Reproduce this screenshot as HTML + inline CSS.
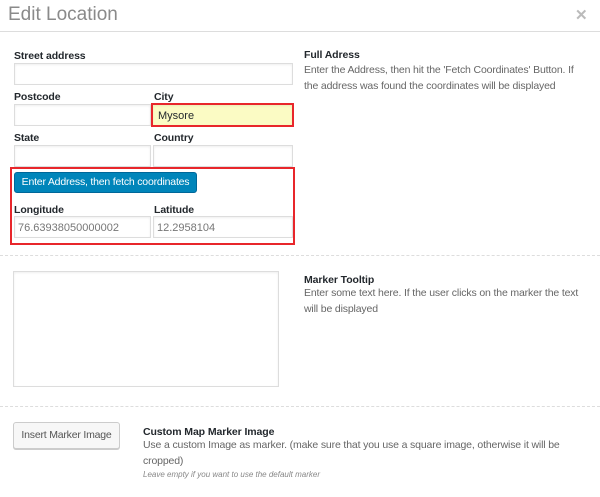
<!DOCTYPE html>
<html><head><style>
body{margin:0;width:600px;height:497px;background:#fff;font-family:"Liberation Sans",sans-serif;position:relative;overflow:hidden;color:#23282d}
.a{position:absolute}
.t{left:8px;top:4px;font-size:19px;color:#8a8a8a}
.hd{left:0;top:31px;width:600px;height:1px;background:#ddd}
.x{left:575px;top:6px;font-size:15px;color:#bbb;font-weight:bold}
.l{font-size:10.5px;font-weight:bold;color:#23282d;letter-spacing:-.1px}
.i{border:1px solid #ddd;box-shadow:inset 0 1px 2px rgba(0,0,0,.07);background:#fff;box-sizing:border-box;font-size:11px;color:#777;padding:4px 3px;line-height:12px}
.d{font-size:10.5px;color:#666;line-height:15.5px;letter-spacing:-.15px}
.dash{left:0;width:600px;border-top:1px dashed #ddd;height:0}
.red{border:2px solid #e8262b;box-sizing:border-box}
</style></head><body>
<div class="a t">Edit Location</div>
<div class="a x">✕</div>
<div class="a hd"></div>

<div class="a l" style="left:14px;top:50px">Street address</div>
<div class="a i" style="left:14px;top:63px;width:279px;height:22px"></div>
<div class="a l" style="left:14px;top:91px">Postcode</div>
<div class="a i" style="left:14px;top:104px;width:137px;height:22px"></div>
<div class="a l" style="left:154px;top:91px">City</div>
<div class="a i red" style="left:151px;top:103px;width:143px;height:24px;background:#fbfbc4;color:#23282d;padding:5px 5px">Mysore</div>
<div class="a l" style="left:14px;top:132px">State</div>
<div class="a i" style="left:14px;top:145px;width:137px;height:22px"></div>
<div class="a l" style="left:154px;top:132px">Country</div>
<div class="a i" style="left:153px;top:145px;width:140px;height:22px"></div>

<div class="a red" style="left:10px;top:167px;width:285px;height:78px"></div>
<div class="a" style="left:14px;top:172px;width:183px;height:21px;background:#0085ba;border:1px solid #006799;box-sizing:border-box;border-radius:3px;color:#fff;font-size:10.5px;text-align:center;line-height:19px;white-space:nowrap;letter-spacing:-.2px">Enter Address, then fetch coordinates</div>
<div class="a l" style="left:14px;top:204px">Longitude</div>
<div class="a i" style="left:14px;top:216px;width:137px;height:22px;padding:5px 3px">76.63938050000002</div>
<div class="a l" style="left:154px;top:204px">Latitude</div>
<div class="a i" style="left:153px;top:216px;width:140px;height:22px;padding:5px 3px">12.2958104</div>

<div class="a l" style="left:304px;top:49px">Full Adress</div>
<div class="a d" style="left:304px;top:63px;width:282px">Enter the Address, then hit the 'Fetch Coordinates' Button. If the address was found the coordinates will be displayed</div>

<div class="a dash" style="top:255px"></div>
<div class="a i" style="left:13px;top:271px;width:266px;height:116px"></div>
<div class="a l" style="left:304px;top:274px">Marker Tooltip</div>
<div class="a d" style="left:304px;top:286px;width:290px">Enter some text here. If the user clicks on the marker the text will be displayed</div>

<div class="a dash" style="top:406px"></div>
<div class="a" style="left:13px;top:422px;width:107px;height:27px;background:#f7f7f7;border:1px solid #ccc;box-sizing:border-box;border-radius:3px;box-shadow:0 1px 0 #ccc;font-size:10.5px;color:#555;text-align:center;line-height:25px;letter-spacing:-.2px">Insert Marker Image</div>
<div class="a l" style="left:143px;top:426px">Custom Map Marker Image</div>
<div class="a d" style="left:143px;top:438px;width:440px">Use a custom Image as marker. (make sure that you use a square image, otherwise it will be cropped)</div>
<div class="a" style="left:143px;top:470px;font-size:8px;font-style:italic;color:#888">Leave empty if you want to use the default marker</div>
</body></html>
